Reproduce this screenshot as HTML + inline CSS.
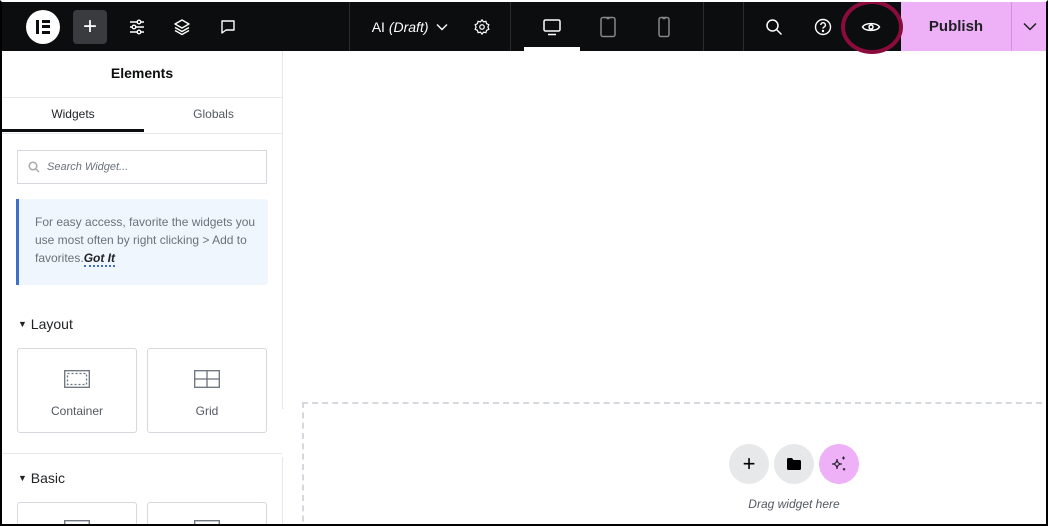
<!DOCTYPE html>
<html><head><meta charset="utf-8"><style>
*{box-sizing:border-box;margin:0;padding:0}
html,body{width:1048px;height:526px;overflow:hidden}
body{background:#fff;font-family:"Liberation Sans",sans-serif;position:relative}
.frame{position:absolute;left:0;top:0;width:1048px;height:526px;border:2px solid #000;border-top:2px solid #fff;pointer-events:none;z-index:10}
.top{position:absolute;left:1px;top:2px;width:1046px;height:49px;background:#0c0d0e}
.ic{position:absolute;top:0;height:49px;display:flex;align-items:center;justify-content:center}
.sep{position:absolute;top:0;width:1px;height:49px;background:#2b2c2e}
.side{position:absolute;left:2px;top:51px;width:281px;height:473px;background:#fff;border-right:1px solid #e6e8ea;overflow:hidden}
.canvas{position:absolute;left:284px;top:51px;width:762px;height:473px;background:#fff;overflow:hidden}
.card{position:absolute;width:120px;height:85px;border:1px solid #d5d8dc;border-radius:3px;text-align:center;font-size:12px;color:#515962}
</style></head><body>
<div class="top">
  <div class="ic" style="left:25px;width:34px"><div style="width:34px;height:34px;border-radius:50%;background:#fff;position:relative">
    <div style="position:absolute;left:10px;top:10px;width:3px;height:14px;background:#0c0d0e"></div>
    <div style="position:absolute;left:16px;top:10px;width:8px;height:3px;background:#0c0d0e"></div>
    <div style="position:absolute;left:16px;top:15.5px;width:8px;height:3px;background:#0c0d0e"></div>
    <div style="position:absolute;left:16px;top:21px;width:8px;height:3px;background:#0c0d0e"></div></div></div>
  <div class="ic" style="left:72px;width:34px"><div style="width:34px;height:34px;border-radius:4px;background:#3a3b3e;color:#fff;font-size:24px;line-height:33px;text-align:center;font-weight:300">+</div></div>
  <div class="ic" style="left:124px;width:24px"><svg width="18" height="18" viewBox="0 0 18 18" fill="none" stroke="#fff" stroke-width="1.4"><path d="M2 4h14M2 9h14M2 14h14"/><circle cx="11" cy="4" r="1.8" fill="#0c0d0e"/><circle cx="6" cy="9" r="1.8" fill="#0c0d0e"/><circle cx="11" cy="14" r="1.8" fill="#0c0d0e"/></svg></div>
  <div class="ic" style="left:169px;width:24px"><svg width="18" height="18" viewBox="0 0 18 18" fill="none" stroke="#fff" stroke-width="1.4" stroke-linejoin="round"><path d="M9 2l7 4-7 4-7-4z"/><path d="M2 9.5l7 4 7-4"/><path d="M2 12.5l7 4 7-4"/></svg></div>
  <div class="ic" style="left:215px;width:24px"><svg width="18" height="18" viewBox="0 0 18 18" fill="none" stroke="#fff" stroke-width="1.4" stroke-linejoin="round"><path d="M3 3h12v9H7l-4 3z"/></svg></div>
  <div class="sep" style="left:348px"></div>
  <div class="ic" style="left:364px;width:90px;color:#fff;font-size:14px">AI&nbsp;<i>(Draft)</i>&nbsp;&nbsp;<svg width="12" height="8" viewBox="0 0 12 8" fill="none" stroke="#fff" stroke-width="1.4"><path d="M1 1.5l5 5 5-5"/></svg></div>
  <div class="ic" style="left:469px;width:24px"><svg width="18" height="18" viewBox="0 0 24 24" fill="none" stroke="#fff" stroke-width="1.6"><circle cx="12" cy="12" r="3"/><path d="M12 2.5l2 2.6 3.2-.6.9 3.1 3 1.3-1.2 3.1 1.2 3.1-3 1.3-.9 3.1-3.2-.6-2 2.6-2-2.6-3.2.6-.9-3.1-3-1.3 1.2-3.1-1.2-3.1 3-1.3.9-3.1 3.2.6z"/></svg></div>
  <div class="sep" style="left:509px"></div>
  <div class="ic" style="left:540px;width:22px"><svg width="20" height="20" viewBox="0 0 20 20" fill="none" stroke="#fff" stroke-width="1.5"><rect x="2" y="3" width="16" height="11" rx="1.5"/><path d="M6 17.5h8"/></svg></div>
  <div style="position:absolute;left:523px;top:45px;width:56px;height:4px;background:#fff"></div>
  <div class="ic" style="left:596px;width:22px"><svg width="18" height="22" viewBox="0 0 18 22" fill="none" stroke="#888" stroke-width="1.5"><rect x="2" y="1.5" width="14" height="19" rx="2"/><path d="M7.5 2.5h3"/></svg></div>
  <div class="ic" style="left:652px;width:22px"><svg width="14" height="22" viewBox="0 0 14 22" fill="none" stroke="#888" stroke-width="1.5"><rect x="2" y="1.5" width="10" height="19" rx="2"/><path d="M5.5 2.5h3"/></svg></div>
  <div class="sep" style="left:702px"></div>
  <div class="sep" style="left:742px"></div>
  <div class="ic" style="left:762px;width:22px"><svg width="18" height="18" viewBox="0 0 18 18" fill="none" stroke="#fff" stroke-width="1.5"><circle cx="7.5" cy="7.5" r="5.5"/><path d="M11.5 11.5l5 5"/></svg></div>
  <div class="ic" style="left:811px;width:22px"><svg width="18" height="18" viewBox="0 0 18 18" fill="none" stroke="#fff" stroke-width="1.4"><circle cx="9" cy="9" r="7.5"/><path d="M6.8 7a2.3 2.3 0 1 1 3 2.2c-.6.3-.8.7-.8 1.4"/><circle cx="9" cy="13" r=".5" fill="#fff"/></svg></div>
  <div class="ic" style="left:859px;width:22px"><svg width="20" height="14" viewBox="0 0 20 14" fill="none" stroke="#fff" stroke-width="1.5"><path d="M1.5 7C4 2.5 16 2.5 18.5 7 16 11.5 4 11.5 1.5 7z"/><circle cx="10" cy="7" r="2"/></svg></div>
  <div style="position:absolute;left:900px;top:0;width:110px;height:49px;background:#eeb0f7;color:#1f2124;font-size:15px;font-weight:bold;line-height:49px;text-align:center">Publish</div>
  <div style="position:absolute;left:1010px;top:0;width:1px;height:49px;background:#d58ee0"></div>
  <div style="position:absolute;left:1011px;top:0;width:35px;height:49px;background:#eeb0f7;display:flex;align-items:center;justify-content:center"><svg width="14" height="9" viewBox="0 0 14 9" fill="none" stroke="#1f2124" stroke-width="1.5"><path d="M1 1.5l6 6 6-6"/></svg></div>
</div>
<div style="position:absolute;left:841px;top:0;width:62px;height:54px;border:4px solid #8b0b3c;border-radius:50%;z-index:5"></div>

<div class="side">
  <div style="height:47px;line-height:45px;text-align:center;font-size:14px;font-weight:bold;color:#0c0d0e;border-bottom:1px solid #e6e8ea">Elements</div>
  <div style="height:36px;position:relative;border-bottom:1px solid #e6e8ea;font-size:12px">
    <div style="position:absolute;left:0;width:142px;text-align:center;line-height:32px;color:#1f2124">Widgets</div>
    <div style="position:absolute;left:142px;width:139px;text-align:center;line-height:32px;color:#515962">Globals</div>
    <div style="position:absolute;left:0;top:31px;width:142px;height:3px;background:#0c0d0e"></div>
  </div>
  <div style="position:absolute;left:15px;top:99px;width:250px;height:34px;border:1px solid #d5d8dc;font-size:11px;color:#69727d;font-style:italic;line-height:32px;padding-left:29px">
    <svg style="position:absolute;left:10px;top:10px" width="12" height="12" viewBox="0 0 12 12" fill="none" stroke="#aaa" stroke-width="1.5"><circle cx="5" cy="5" r="3.8"/><path d="M8 8l3 3"/></svg>Search Widget...</div>
  <div style="position:absolute;left:14px;top:148px;width:252px;height:86px;background:#f0f6fd;border-left:3px solid #3f6fcb;border-radius:0 3px 3px 0;padding:14px 0 0 16px;font-size:12px;line-height:18px;color:#69727d">For easy access, favorite the widgets you use most often by right clicking &gt; Add to favorites.<b style="color:#1f2124;font-style:italic;border-bottom:2px dotted #3f6fcb">Got It</b></div>
  <div style="position:absolute;left:16px;top:265px;font-size:14px;color:#1f2124"><span style="font-size:9px;vertical-align:2px">▼</span> Layout</div>
  <div class="card" style="left:15px;top:297px"><svg style="margin-top:21px" width="26" height="18" viewBox="0 0 26 18" fill="none" stroke="#69727d" stroke-width="1.3"><rect x=".7" y=".7" width="24.6" height="16.6"/><rect x="3.5" y="3.5" width="19" height="11" stroke-dasharray="2 2"/></svg><div style="margin-top:13px">Container</div></div>
  <div class="card" style="left:145px;top:297px"><svg style="margin-top:21px" width="26" height="18" viewBox="0 0 26 18" fill="none" stroke="#69727d" stroke-width="1.3"><rect x=".7" y=".7" width="24.6" height="16.6"/><path d="M13 .7v16.6M.7 9h24.6"/></svg><div style="margin-top:13px">Grid</div></div>
  <div style="position:absolute;left:0;top:402px;width:281px;height:1px;background:#e6e8ea"></div>
  <div style="position:absolute;left:16px;top:419px;font-size:14px;color:#1f2124"><span style="font-size:9px;vertical-align:2px">▼</span> Basic</div>
  <div class="card" style="left:15px;top:451px;height:40px"><svg style="margin-top:17px" width="26" height="10"><rect x=".7" y=".7" width="24.6" height="10" fill="none" stroke="#69727d" stroke-width="1.3"/></svg></div>
  <div class="card" style="left:145px;top:451px;height:40px"><svg style="margin-top:17px" width="26" height="10"><rect x=".7" y=".7" width="24.6" height="10" fill="none" stroke="#69727d" stroke-width="1.3"/></svg></div>
</div>
<div style="position:absolute;left:282px;top:408px;width:17px;height:50px;background:#fff;border:1px solid #eee;border-left:none;font-size:11px;color:#555;line-height:48px;text-align:center">‹</div>

<div class="canvas">
  <div style="position:absolute;left:18px;top:351px;width:750px;height:130px;border:2px dashed #d5d8dc"></div>
  <div style="position:absolute;left:445px;top:393px;width:40px;height:40px;border-radius:50%;background:#e6e8ea;text-align:center;line-height:40px;font-size:22px;color:#000">+</div>
  <div style="position:absolute;left:490px;top:393px;width:40px;height:40px;border-radius:50%;background:#e6e8ea;display:flex;align-items:center;justify-content:center"><svg width="14" height="12"><path d="M0 1.5Q0 0 1.5 0H5l1.5 2H12.5Q14 2 14 3.5V10.5Q14 12 12.5 12H1.5Q0 12 0 10.5Z" fill="#000"/></svg></div>
  <div style="position:absolute;left:535px;top:393px;width:40px;height:40px;border-radius:50%;background:#eeb0f7;display:flex;align-items:center;justify-content:center"><svg width="18" height="18" viewBox="0 0 18 18" fill="none" stroke="#1f2124" stroke-width="1.1"><path d="M7 4q0 5 5 5-5 0-5 5 0-5-5-5 5 0 5-5z"/><path d="M13.5 1.5v3M12 3h3M14 13v2.5M12.8 14.2h2.5"/></svg></div>
  <div style="position:absolute;left:440px;top:446px;width:140px;text-align:center;font-size:12px;font-style:italic;color:#515962">Drag widget here</div>
</div>
<div class="frame"></div>
</body></html>
